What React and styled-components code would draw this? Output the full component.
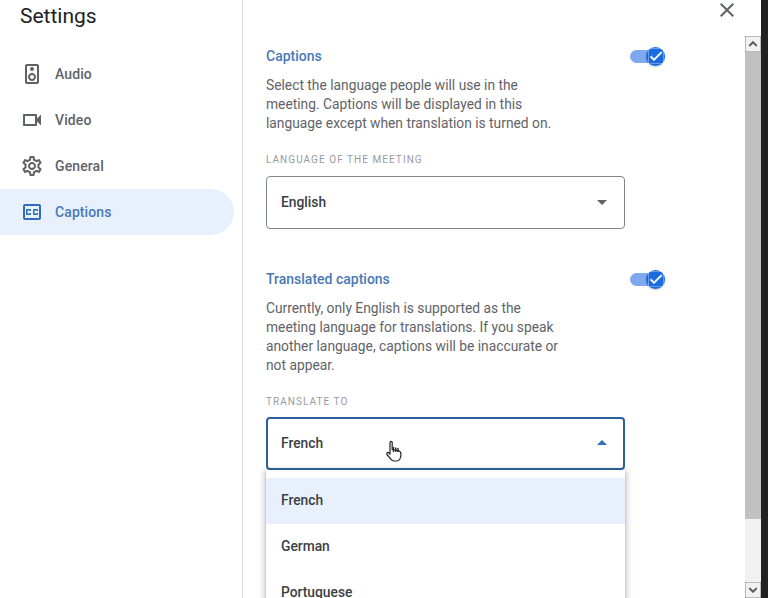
import React from 'react';
import styled, { createGlobalStyle } from 'styled-components';
import { MdOutlineSpeaker, MdOutlineVideocam, MdOutlineSettings, MdOutlineClosedCaption, MdClose, MdArrowDropDown, MdArrowDropUp, MdCheck, MdKeyboardArrowUp, MdKeyboardArrowDown } from 'react-icons/md';

const Global = createGlobalStyle`
  html, body { margin: 0; padding: 0; background: #fff; }
  body { font-family: Roboto, "Liberation Sans", sans-serif; }
`;
const Window = styled.div`
  display: flex; width: 768px; height: 598px; overflow: hidden; background: #fff; position: relative;
`;
const Sidebar = styled.aside`
  flex: 0 0 243px; box-sizing: border-box; border-right: 1px solid #dadce0; height: 100%;
`;
const Title = styled.h1`
  margin: 0; padding: 3px 0 0 20px; height: 51px; box-sizing: border-box;
  font-size: 21px; line-height: 26px; font-weight: 400; color: #202124;
`;
const NavItem = styled.div`
  display: flex; align-items: center; height: 46px; width: 234px; box-sizing: border-box;
  padding-left: 20px; gap: 11px; border-radius: 0 23px 23px 0;
  font-size: 14px; font-weight: 500; letter-spacing: .1px;
  color: ${p => p.$active ? '#4a79b8' : '#5f6368'};
  background: ${p => p.$active ? '#e8f0fb' : 'transparent'};
  svg { flex: none; color: ${p => p.$active ? '#2f6cbb' : '#5f6368'}; }
`;
const Main = styled.main`
  flex: 1; padding: 47px 0 0 23px; min-width: 0; position: relative;
`;
const Close = styled.div`
  position: absolute; top: -2px; left: 472px; color: #5f6368; line-height: 0;
`;
const Section = styled.section`
  width: 399px; margin-bottom: ${p => p.$gap || 0}px;
`;
const HeadRow = styled.div`
  display: flex; justify-content: space-between; align-items: center; height: 19px; box-sizing: border-box; padding-bottom: 1px;
`;
const Heading = styled.h2`
  margin: 0; font-size: 14px; font-weight: 500; color: #4a79b8;
`;
const Toggle = styled.div`
  position: relative; width: 35px; height: 13px; border-radius: 7px 0 0 7px;
  background: linear-gradient(to right, #7fa9ee 0 26px, transparent 26px);
`;
const Thumb = styled.div`
  position: absolute; right: 0; top: -3px; width: 19px; height: 19px; border-radius: 50%;
  background: #1a6be0; color: #fff; display: flex; align-items: center; justify-content: center;
  box-shadow: 0 1px 2px rgba(60,64,67,.3);
`;
const Description = styled.p`
  margin: 10px 0 0; width: 300px; font-size: 13.8px; line-height: 19px; color: #5f6368;
`;
const FieldLabel = styled.div`
  margin-top: ${p => p.$top}px; font-size: 10px; line-height: 12px; font-weight: 400;
  letter-spacing: 1.05px; text-transform: uppercase; color: #969a9f;
`;
const Select = styled.div`
  position: relative; margin-top: ${p => p.$top}px; width: 359px; height: 53px; box-sizing: border-box;
  display: flex; align-items: center; justify-content: space-between;
  padding: 0 ${p => p.$open ? 9 : 10}px 1px ${p => p.$open ? 13 : 14}px;
  border: ${p => p.$open ? '2px solid #2a609f' : '1px solid #80868b'}; border-radius: 4px;
  font-size: 13.8px; font-weight: 500; color: #3c4043;
  svg { color: ${p => p.$open ? '#2f6cbb' : '#5f6368'}; }
`;
const Cursor = styled.svg`
  position: absolute; left: 117px; top: 20px;
`;
const Menu = styled.div`
  position: absolute; left: 266px; top: 470px; width: 359px; padding-top: 8px; background: #fff;
  box-shadow: 0 2px 6px 2px rgba(60,64,67,.26), 0 1px 2px rgba(60,64,67,.3);
  border-radius: 0 0 4px 4px;
`;
const Option = styled.div`
  height: 46px; box-sizing: border-box; display: flex; align-items: center; padding: 0 0 2px 15px;
  font-size: 13.8px; font-weight: 500; color: #3c4043;
  background: ${p => p.$selected ? '#e8f0fb' : '#fff'};
`;
const Scrollbar = styled.div`
  flex: 0 0 16px; margin-top: 36px; background: #f1f1f1; display: flex; flex-direction: column;
`;
const ScrollButton = styled.div`
  height: 16px; display: flex; align-items: center; justify-content: center; color: #505050;
  background: #f1f1f1;
`;
const ScrollThumb = styled.div`
  flex: 0 0 467px; background: #c1c1c1;
`;
const ScrollTrack = styled.div`
  flex: 1;
`;
const Bezel = styled.div`
  flex: 0 0 7px; background: #202124;
`;

const navItems = [
  { label: 'Audio', Icon: MdOutlineSpeaker },
  { label: 'Video', Icon: MdOutlineVideocam },
  { label: 'General', Icon: MdOutlineSettings },
  { label: 'Captions', Icon: MdOutlineClosedCaption, active: true },
];

const Switch = () => (
  <Toggle><Thumb><MdCheck size={16} strokeWidth={1} stroke="#fff" /></Thumb></Toggle>
);

export default function App() {
  return (
    <Window>
      <Global />
      <Sidebar>
        <Title>Settings</Title>
        {navItems.map(({ label, Icon, active }) => (
          <NavItem key={label} $active={active}><Icon size={24} />{label}</NavItem>
        ))}
      </Sidebar>
      <Main>
        <Close><MdClose size={24} /></Close>
        <Section $gap={41}>
          <HeadRow><Heading>Captions</Heading><Switch /></HeadRow>
          <Description>Select the language people will use in the meeting. Captions will be displayed in this language except when translation is turned on.</Description>
          <FieldLabel $top={21}>Language of the meeting</FieldLabel>
          <Select $top={10}>English<MdArrowDropDown size={24} /></Select>
        </Section>
        <Section>
          <HeadRow><Heading>Translated captions</Heading><Switch /></HeadRow>
          <Description>Currently, only English is supported as the meeting language for translations. If you speak another language, captions will be inaccurate or not appear.</Description>
          <FieldLabel $top={21}>Translate to</FieldLabel>
          <Select $top={9} $open>
            French<MdArrowDropUp size={24} />
            <Cursor width="20" height="24" viewBox="0 0 20 24" fill="#fff" stroke="#222" strokeWidth="1.2" strokeLinejoin="round">
              <path d="M5 3.5c0-1.6 2.2-1.6 2.2 0v7l5.5 1c2 .4 3.3 1.3 3.3 3.5 0 2.8-.4 4-1.4 5.5-.6 1-1.6 1.5-3 1.5H9c-1.3 0-2.2-.6-3-1.6L2 15.500c-1-1.400.8-2.700 2-1.500l1 1z" />
              <path d="M8.500 8v5M10.800 8.500v4.500M13 9v4" fill="none" strokeWidth="1.400" />
            </Cursor>
          </Select>
        </Section>
      </Main>
      <Menu>
        <Option $selected>French</Option>
        <Option>German</Option>
        <Option>Portuguese</Option>
      </Menu>
      <Scrollbar>
        <ScrollButton><MdKeyboardArrowUp size={16} strokeWidth={1} stroke="#505050" /></ScrollButton>
        <ScrollThumb />
        <ScrollTrack />
        <ScrollButton><MdKeyboardArrowDown size={16} strokeWidth={1} stroke="#505050" /></ScrollButton>
      </Scrollbar>
      <Bezel />
    </Window>
  );
}
